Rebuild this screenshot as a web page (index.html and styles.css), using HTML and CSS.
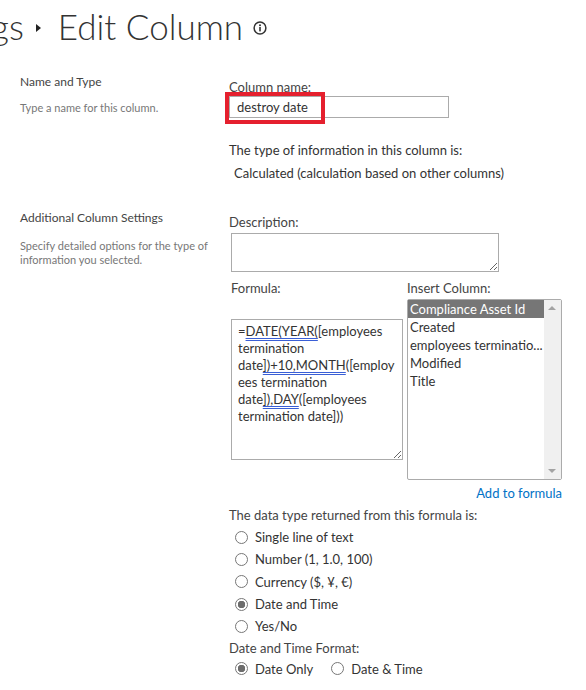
FILE: index.html
```html
<!DOCTYPE html>
<html lang="en">
<head>
    <meta charset="UTF-8">
    <meta name="viewport" content="width=device-width, initial-scale=1.0">
    <title>Edit Column</title>
    <link rel="stylesheet" href="styles.css">
</head>
<body>
    <div class="page-title">
        <h1 class="crumbs">
            <span class="crumb">Settings</span>
            <span class="crumb-sep"></span>
            <span class="crumb-current">Edit Column</span>
            <svg class="info-icon" width="14" height="14" viewBox="0 0 14 14">
                <circle cx="7" cy="7" r="5.9" fill="none" stroke="#333" stroke-width="1.5"/>
                <circle cx="7" cy="4.3" r="1" fill="#333"/>
                <rect x="6.2" y="6" width="1.6" height="4.4" fill="#333"/>
            </svg>
        </h1>
    </div>

    <div class="form">
        <div class="section">
            <div class="section-head">
                <h3>Name and Type</h3>
                <p>Type a name for this column.</p>
            </div>
            <div class="section-body">
                <div class="field-label">Column name:</div>
                <div class="name-field">
                    <input type="text" class="text-input" value="destroy date">
                    <span class="highlight"></span>
                </div>
                <div class="type-label">The type of information in this column is:</div>
                <div class="type-value">Calculated (calculation based on other columns)</div>
            </div>
        </div>

        <div class="section section-settings">
            <div class="section-head">
                <h3>Additional Column Settings</h3>
                <p>Specify detailed options for the type of information you selected.</p>
            </div>
            <div class="section-body">
                <div class="field-label">Description:</div>
                <textarea class="desc-input"></textarea>

                <div class="formula-row">
                    <div class="formula-col">
                        <div class="field-label">Formula:</div>
                        <div class="formula-box">=<u>DATE(YEAR(</u>[employees<br>termination<br>date<u>])+10,MONTH</u>([employ<br>ees termination<br>date<u>]),DAY</u>([employees<br>termination date]))</div>
                    </div>
                    <div class="columns-col">
                        <div class="field-label">Insert Column:</div>
                        <div class="column-list">
                            <ul class="column-items">
                                <li class="selected">Compliance Asset Id</li>
                                <li>Created</li>
                                <li>employees terminatio...</li>
                                <li>Modified</li>
                                <li>Title</li>
                            </ul>
                            <div class="scroll-track">
                                <span class="arrow arrow-up"></span>
                                <span class="arrow arrow-down"></span>
                            </div>
                        </div>
                        <a class="add-link" href="#">Add to formula</a>
                    </div>
                </div>

                <div class="field-label result-label">The data type returned from this formula is:</div>
                <div class="radio-list">
                    <label class="radio"><input type="radio" name="rtype"> Single line of text</label>
                    <label class="radio"><input type="radio" name="rtype"> Number (1, 1.0, 100)</label>
                    <label class="radio"><input type="radio" name="rtype"> Currency ($, ¥, €)</label>
                    <label class="radio"><input type="radio" name="rtype" checked> Date and Time</label>
                    <label class="radio"><input type="radio" name="rtype"> Yes/No</label>
                </div>

                <div class="field-label format-label">Date and Time Format:</div>
                <div class="radio-inline">
                    <label class="radio"><input type="radio" name="dformat" checked> Date Only</label>
                    <label class="radio"><input type="radio" name="dformat"> Date &amp; Time</label>
                </div>
            </div>
        </div>
    </div>
</body>
</html>
```

FILE: styles.css
```css
/* page */
body {
    margin: 0;
    padding: 0;
    background-color: #fff;
    color: #333;
    font-family: Lato, "Open Sans", sans-serif;
    font-size: 13px;
    overflow: hidden;
}

/* breadcrumb title */
.page-title {
    height: 62px;
    overflow: hidden;
}
.crumbs {
    display: flex;
    align-items: center;
    margin: 5px 0 0 -96px;
    font-size: 35px;
    font-weight: 300;
    color: #333;
    white-space: nowrap;
}
.crumb-sep {
    width: 0;
    height: 0;
    margin: 4px 17px 0 12px;
    border-top: 4px solid transparent;
    border-bottom: 4px solid transparent;
    border-left: 5px solid #222;
}
.info-icon {
    margin: 4px 0 0 10px;
}

/* form sections */
.section {
    display: grid;
    grid-template-columns: 209px 1fr;
    padding-left: 20px;
}
.section-head h3 {
    margin: 11px 0 0;
    font-size: 12px;
    font-weight: normal;
    color: #444;
    line-height: 18px;
}
.section-head p {
    margin: 10px 0 0;
    width: 195px;
    font-size: 11px;
    color: #777;
    line-height: 14px;
}
.section-settings .section-head h3 {
    margin-top: 27px;
}
.section-settings .section-head p {
    margin-top: 12px;
}

.field-label {
    line-height: 18px;
    color: #444;
}
.section-body > .field-label:first-child {
    margin-top: 16px;
}
.section-settings .section-body > .field-label:first-child {
    margin-top: 31px;
}

.name-field {
    position: relative;
    width: 220px;
}
.text-input {
    box-sizing: border-box;
    width: 220px;
    height: 22px;
    margin: 0;
    padding: 0 7px;
    border: 1px solid #ababab;
    font: inherit;
    color: #333;
    outline: none;
}
/* red box drawn over the name input */
.highlight {
    position: absolute;
    left: -4px;
    top: -4px;
    width: 92px;
    height: 24px;
    border: 4px solid #e5202e;
}

.type-label {
    margin-top: 23px;
    line-height: 18px;
}
.type-value {
    margin-top: 5px;
    padding-left: 5px;
    line-height: 18px;
}

.desc-input {
    display: block;
    box-sizing: border-box;
    width: 268px;
    height: 39px;
    margin: 2px 0 0 2px;
    border: 1px solid #ababab;
    font: inherit;
}

/* formula + column picker */
.formula-row {
    display: flex;
    gap: 4px;
    margin-top: 7px;
    padding-left: 2px;
}
.formula-col {
    width: 172px;
}
.formula-box {
    box-sizing: border-box;
    width: 172px;
    height: 141px;
    margin-top: 22px;
    padding: 3px 6px;
    border: 1px solid #ababab;
    line-height: 17px;
    white-space: nowrap;
    overflow: hidden;
    resize: both;
}
.formula-box u {
    text-decoration: underline double #3a5fd6;
    text-underline-offset: 2px;
}
.columns-col {
    width: 155px;
    display: flex;
    flex-direction: column;
}
.column-list {
    display: flex;
    height: 181px;
    margin-top: 2px;
    border: 1px solid #ababab;
    border-radius: 2px;
    box-sizing: border-box;
}
.column-items {
    flex: 1;
    margin: 0;
    padding: 0;
    list-style: none;
}
.column-items li {
    padding-left: 2px;
    line-height: 18px;
    white-space: nowrap;
}
.column-items li.selected {
    background-color: #767676;
    color: #fff;
}
.scroll-track {
    position: relative;
    width: 17px;
    background-color: #f0f0f0;
}
.arrow {
    position: absolute;
    left: 4px;
    width: 0;
    height: 0;
    border-left: 4px solid transparent;
    border-right: 4px solid transparent;
}
.arrow-up {
    top: 6px;
    border-bottom: 4px solid #a3a3a3;
}
.arrow-down {
    bottom: 6px;
    border-top: 4px solid #a3a3a3;
}
.add-link {
    align-self: flex-end;
    margin-top: 4px;
    line-height: 18px;
    color: #0072c6;
    text-decoration: none;
}

/* radio groups */
.result-label {
    margin-top: 4px;
}
.radio-list {
    display: flex;
    flex-direction: column;
    margin-top: 2px;
    padding-left: 6px;
}
.radio {
    display: flex;
    align-items: center;
    height: 22.3px;
    color: #333;
}
.radio input {
    appearance: none;
    box-sizing: border-box;
    width: 13px;
    height: 13px;
    margin: 0 7px 0 0;
    border: 1px solid #777;
    border-radius: 50%;
    background-color: #fff;
}
.radio input:checked {
    background: radial-gradient(circle, #6d6d6d 0 3.5px, #fff 4px);
}
.format-label {
    margin-top: 2px;
}
.radio-inline {
    display: flex;
    gap: 18px;
    padding-left: 6px;
}
```
